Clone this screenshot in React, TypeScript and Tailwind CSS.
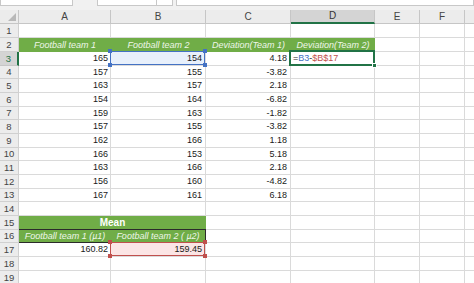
import React from 'react';
import clsx from 'clsx';

// column widths: A..F, G fills the rest
const colW = ['w-[92px]', 'w-[95px]', 'w-[85px]', 'w-[84px]', 'w-[45px]', 'w-[45px]'];
const letters = ['A', 'B', 'C', 'D', 'E', 'F'];

const rowH = [
  'h-[14px]', 'h-[14px]', 'h-[14px]', 'h-[13px]', 'h-[14px]', 'h-[14px]', 'h-[13px]',
  'h-[14px]', 'h-[14px]', 'h-[13px]', 'h-[14px]', 'h-[14px]', 'h-[13px]', 'h-[14px]',
  'h-[14px]', 'h-[13px]', 'h-[14px]', 'h-[14px]', 'h-[14px]',
];

const data: [string, string, string][] = [
  ['165', '154', '4.18'],
  ['157', '155', '-3.82'],
  ['163', '157', '2.18'],
  ['154', '164', '-6.82'],
  ['159', '163', '-1.82'],
  ['157', '155', '-3.82'],
  ['162', '166', '1.18'],
  ['166', '153', '5.18'],
  ['163', '166', '2.18'],
  ['156', '160', '-4.82'],
  ['167', '161', '6.18'],
];

const GRID = 'border-r border-b border-r-[#dadada] border-b-[#dadada]';
const GREEN = 'bg-[#70ad47] italic text-[#eef6e9] justify-center';

function Cell({
  w,
  line = GRID,
  className,
  children,
}: {
  w: string;
  line?: string;
  className?: string;
  children?: React.ReactNode;
}) {
  return (
    <div className={clsx('shrink-0 flex items-center whitespace-nowrap', w, line, className)}>
      {children}
    </div>
  );
}

function RefBox({ color }: { color: 'blue' | 'red' }) {
  const line = color === 'blue' ? 'border-[#4472c4]' : 'border-[#c0504d]';
  const dot = color === 'blue' ? 'bg-[#4472c4]' : 'bg-[#c0504d]';
  return (
    <div className={clsx('absolute -left-px -top-px right-0 bottom-0 border z-10', line)}>
      <span className={clsx('absolute w-[4px] h-[4px] -left-[3px] -top-[3px]', dot)} />
      <span className={clsx('absolute w-[4px] h-[4px] -right-[3px] -top-[3px]', dot)} />
      <span className={clsx('absolute w-[4px] h-[4px] -left-[3px] -bottom-[3px]', dot)} />
      <span className={clsx('absolute w-[4px] h-[4px] -right-[3px] -bottom-[3px]', dot)} />
    </div>
  );
}

function Row({ n, children }: { n: number; children?: React.ReactNode }) {
  const sel = n === 3;
  return (
    <div className={clsx('flex', rowH[n - 1])}>
      <div
        className={clsx(
          'w-[19px] shrink-0 flex items-center justify-center border-b text-[9.5px]',
          sel
            ? 'bg-[#d4d4d4] border-r-2 border-r-[#217346] border-b-[#c6c6c6] text-[#217346]'
            : 'bg-[#ececec] border-r border-r-[#d0d0d0] border-b-[#d0d0d0] text-[#444]'
        )}
      >
        {n}
      </div>
      {children}
    </div>
  );
}

function Empty({ from = 0 }: { from?: number }) {
  return (
    <>
      {colW.slice(from).map((w, i) => (
        <Cell key={i} w={w} />
      ))}
      <Cell w="flex-1" line="border-b border-b-[#dadada]" />
    </>
  );
}

export default function App() {
  return (
    <div className="w-[474px] h-[283px] overflow-hidden bg-white font-['Liberation_Sans',Arial,sans-serif] text-[9px] leading-none text-[#1a1a1a]">
      {/* formula bar remnants */}
      <div className="h-[10px] bg-[#f1f1f1] flex items-start">
        <div className="w-[73px] h-[6px] bg-white border border-t-0 border-[#c8c8c8]" />
        <div className="ml-[24px] w-[60px] h-[6px] bg-white border border-t-0 border-[#c8c8c8]" />
        <div className="w-[16px] h-[6px] bg-white border border-t-0 border-l-0 border-[#c8c8c8]" />
        <div className="ml-[3px] flex-1 h-[6px] bg-white border border-t-0 border-[#c8c8c8]" />
      </div>

      {/* column headers */}
      <div className="flex h-[14px]">
        <div className="relative w-[19px] shrink-0 bg-[#ececec] border-r border-b border-[#c6c6c6]">
          <svg className="absolute right-[2px] bottom-[2px]" width="8" height="8" viewBox="0 0 8 8">
            <polygon points="8,0 8,8 0,8" fill="#b8b8b8" />
          </svg>
        </div>
        {colW.map((w, i) => (
          <div
            key={i}
            className={clsx(
              'shrink-0 flex items-center justify-center text-[10px] border-r',
              w,
              i === 3
                ? 'bg-[#d4d4d4] border-b-2 border-b-[#217346] border-r-[#c6c6c6] text-[#333]'
                : 'bg-[#ececec] border-b border-r-[#c6c6c6] border-b-[#c6c6c6] text-[#444]'
            )}
          >
            {letters[i]}
          </div>
        ))}
        <div className="flex-1 bg-[#ececec] border-b border-[#c6c6c6]" />
      </div>

      <Row n={1}>
        <Empty />
      </Row>

      <Row n={2}>
        {['Football team 1', 'Football team 2', 'Deviation(Team 1)', 'Deviation(Team 2)'].map((t, i) => (
          <Cell key={i} w={colW[i]} line="" className={GREEN}>
            {t}
          </Cell>
        ))}
        <Empty from={4} />
      </Row>

      {data.map(([a, b, c], i) => {
        const n = i + 3;
        return (
          <Row key={n} n={n}>
            <Cell w={colW[0]} className="justify-end pr-[2px]">{a}</Cell>
            <Cell w={colW[1]} className={clsx('relative justify-end pr-[3px]', n === 3 && 'bg-[#e8f0fb]')}>
              {b}
              {n === 3 && <RefBox color="blue" />}
            </Cell>
            <Cell w={colW[2]} className="justify-end pr-[3px]">{c}</Cell>
            <Cell w={colW[3]} className="relative pl-[2px]">
              {n === 3 && (
                <>
                  <span>
                    =<span className="text-[#4472c4]">B3</span>-<span className="text-[#c0504d]">$B$17</span>
                  </span>
                  <div className="absolute -left-[2px] -top-[2px] -right-px -bottom-px border-2 border-[#217346] z-10">
                    <span className="absolute w-[5px] h-[5px] bg-[#217346] border border-white -right-[4px] -bottom-[4px]" />
                  </div>
                </>
              )}
            </Cell>
            <Empty from={4} />
          </Row>
        );
      })}

      <Row n={14}>
        <Empty />
      </Row>

      <Row n={15}>
        <Cell
          w="w-[187px]"
          line="border-b border-b-[#2b2b2b]"
          className="justify-center bg-[#70ad47] font-bold text-white text-[10px]"
        >
          Mean
        </Cell>
        <Empty from={2} />
      </Row>

      <Row n={16}>
        <Cell w={colW[0]} line="border-b border-b-[#2b2b2b]" className={GREEN}>
          Football team 1 (µ1)
        </Cell>
        <Cell w={colW[1]} line="border-r border-b border-r-[#2b2b2b] border-b-[#2b2b2b]" className={GREEN}>
          Football team 2 ( µ2)
        </Cell>
        <Empty from={2} />
      </Row>

      <Row n={17}>
        <Cell w={colW[0]} className="justify-end pr-[2px]">160.82</Cell>
        <Cell w={colW[1]} className="relative justify-end pr-[3px] bg-[#fbe5e5]">
          159.45
          <RefBox color="red" />
        </Cell>
        <Empty from={2} />
      </Row>

      <Row n={18}>
        <Empty />
      </Row>
      <Row n={19}>
        <Empty />
      </Row>
    </div>
  );
}
